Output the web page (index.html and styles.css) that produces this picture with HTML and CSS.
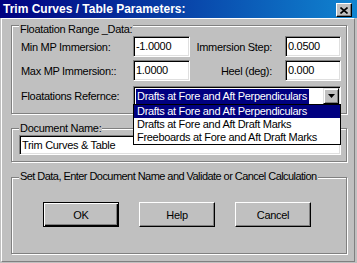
FILE: index.html
```html
<!DOCTYPE html>
<html lang="en">
<head>
  <meta charset="UTF-8">
  <title>Trim Curves / Table Parameters</title>
  <link rel="stylesheet" href="styles.css">
</head>
<body>
<div class="window">
  <header class="titlebar">
    <span class="title">Trim Curves / Table Parameters:</span>
    <span class="close">
      <svg width="8" height="7" viewBox="0 0 8 7"><path d="M0.5 0.5 L7.5 6.5 M7.5 0.5 L0.5 6.5" stroke="#000" stroke-width="1.6" fill="none"/></svg>
    </span>
  </header>
  <main class="client">
    <section class="group group-range">
      <div class="group-title">Floatation Range _Data:</div>
      <div class="range-grid">
        <label class="lbl">Min MP Immersion:</label>
        <div class="field">-1.0000</div>
        <label class="lbl lbl-right">Immersion Step:</label>
        <div class="field">0.0500</div>
        <label class="lbl">Max MP Immersion::</label>
        <div class="field">1.0000</div>
        <label class="lbl lbl-right">Heel (deg):</label>
        <div class="field">0.000</div>
        <label class="lbl lbl-combo">Floatations Refernce:</label>
        <div class="combo">
          <span class="combo-value">Drafts at Fore and Aft Perpendiculars</span>
          <span class="combo-btn">
            <svg width="7" height="4" viewBox="0 0 7 4"><path d="M0 0 H7 L3.5 4 Z" fill="#000"/></svg>
          </span>
          <ul class="dropdown">
            <li class="dropdown-item selected">Drafts at Fore and Aft Perpendiculars</li>
            <li class="dropdown-item">Drafts at Fore and Aft Draft Marks</li>
            <li class="dropdown-item">Freeboards at Fore and Aft Draft Marks</li>
          </ul>
        </div>
      </div>
    </section>
    <section class="group group-doc">
      <div class="group-title">Document Name:</div>
      <div class="field field-wide">Trim Curves &amp; Table</div>
    </section>
    <section class="group group-actions">
      <div class="group-title group-title-long">Set Data, Enter Document Name and Validate or Cancel Calculation</div>
      <div class="buttons">
        <button class="btn btn-default">OK</button>
        <button class="btn">Help</button>
        <button class="btn">Cancel</button>
      </div>
    </section>
  </main>
</div>
</body>
</html>
```

FILE: styles.css
```css
body {
  margin: 0;
  width: 357px;
  height: 263px;
  overflow: hidden;
  background: #c0c0c0;
  color: #000;
  font: 11px "Liberation Sans", Arial, sans-serif;
  letter-spacing: -0.3px;
}
.window {
  height: 263px;
  display: flex;
  flex-direction: column;
}
.titlebar {
  flex: none;
  height: 18px;
  display: flex;
  align-items: center;
  justify-content: space-between;
  padding: 0 5px 0 3px;
  background: linear-gradient(to right, #000080, #1084d0);
  color: #fff;
  font: bold 12px "Liberation Sans", Arial, sans-serif;
  letter-spacing: 0;
}
.close {
  width: 16px;
  height: 14px;
  margin-top: 2px;
  box-sizing: border-box;
  display: flex;
  align-items: center;
  justify-content: center;
  background: #c0c0c0;
  border: 1px solid;
  border-color: #fff #000 #000 #fff;
  box-shadow: inset -1px -1px #808080;
}
.client {
  flex: 1;
  margin: 0 2px 1px 1px;
  padding: 0 7px 0 9px;
  border: 1px solid;
  border-color: #fff #808080 #808080 #fff;
}
.group {
  border: 1px solid #808080;
  box-shadow: inset 1px 1px #fff, 1px 1px #fff;
}
.group-title {
  width: fit-content;
  margin: -10px 0 0 7px;
  padding: 1px 1px 0;
  line-height: 14px;
  background: #c0c0c0;
  white-space: nowrap;
}
.group-title-long {
  letter-spacing: -0.55px;
}
.group-range {
  margin-top: 6px;
  padding: 5px 0 7px;
}
.range-grid {
  display: grid;
  grid-template-columns: 112px 57px 95px 56px;
  grid-template-rows: 21px 21px 22px;
  row-gap: 3px;
  align-items: center;
  padding: 0 5px 0 9px;
}
.lbl {
  white-space: nowrap;
}
.lbl-right {
  text-align: right;
  padding-right: 13px;
}
.lbl-combo {
  align-self: end;
  line-height: 20px;
}
.field {
  box-sizing: border-box;
  height: 21px;
  padding-left: 2px;
  line-height: 18px;
  background: #fff;
  border: 1px solid;
  border-color: #808080 #fff #fff #808080;
  box-shadow: inset 1px 1px #000, inset -1px -1px #dfdfdf;
  white-space: nowrap;
  overflow: hidden;
}
.combo {
  grid-column: 2 / 5;
  align-self: end;
  position: relative;
  min-width: 0;
  box-sizing: border-box;
  height: 20px;
  padding: 1px;
  display: flex;
  align-items: center;
  background: #fff;
  border: 1px solid;
  border-color: #808080 #fff #fff #808080;
  box-shadow: inset 1px 1px #000, inset -1px -1px #dfdfdf;
}
.combo-value {
  min-width: 0;
  margin-left: 1px;
  padding: 0 2px 0 1px;
  line-height: 15px;
  background: #000080;
  color: #fff;
  white-space: nowrap;
  overflow: hidden;
}
.combo-btn {
  flex: none;
  margin-left: auto;
  width: 16px;
  height: 16px;
  box-sizing: border-box;
  display: flex;
  align-items: center;
  justify-content: center;
  background: #c0c0c0;
  border: 1px solid;
  border-color: #dfdfdf #000 #000 #dfdfdf;
  box-shadow: inset 1px 1px #fff, inset -1px -1px #808080;
}
.dropdown {
  position: absolute;
  top: calc(100% - 1px);
  left: -1px;
  right: -1px;
  margin: 0;
  padding: 0;
  list-style: none;
  background: #fff;
  border: 1px solid #000;
  z-index: 2;
}
.dropdown-item {
  padding-left: 3px;
  line-height: 13px;
  white-space: nowrap;
}
.dropdown-item.selected {
  background: #000080;
  color: #fff;
}
.group-doc {
  margin-top: 14px;
  padding: 1px 5px 6px 7px;
}
.group-doc .group-title {
  margin-left: 0;
}
.field-wide {
  height: 20px;
  line-height: 18px;
}
.group-actions {
  margin-top: 15px;
  padding: 0 0 26px;
}
.buttons {
  display: flex;
  gap: 20px;
  margin-top: 19px;
  padding-left: 31px;
}
.btn {
  width: 76px;
  height: 25px;
  box-sizing: border-box;
  padding: 0;
  font: inherit;
  letter-spacing: inherit;
  color: #000;
  background: #c0c0c0;
  border: 1px solid;
  border-color: #fff #000 #000 #fff;
  box-shadow: inset -1px -1px #808080;
}
.btn-default {
  border-color: #000;
  box-shadow: inset 1px 1px #fff, inset -1px -1px #000, inset -2px -2px #808080;
}
```
